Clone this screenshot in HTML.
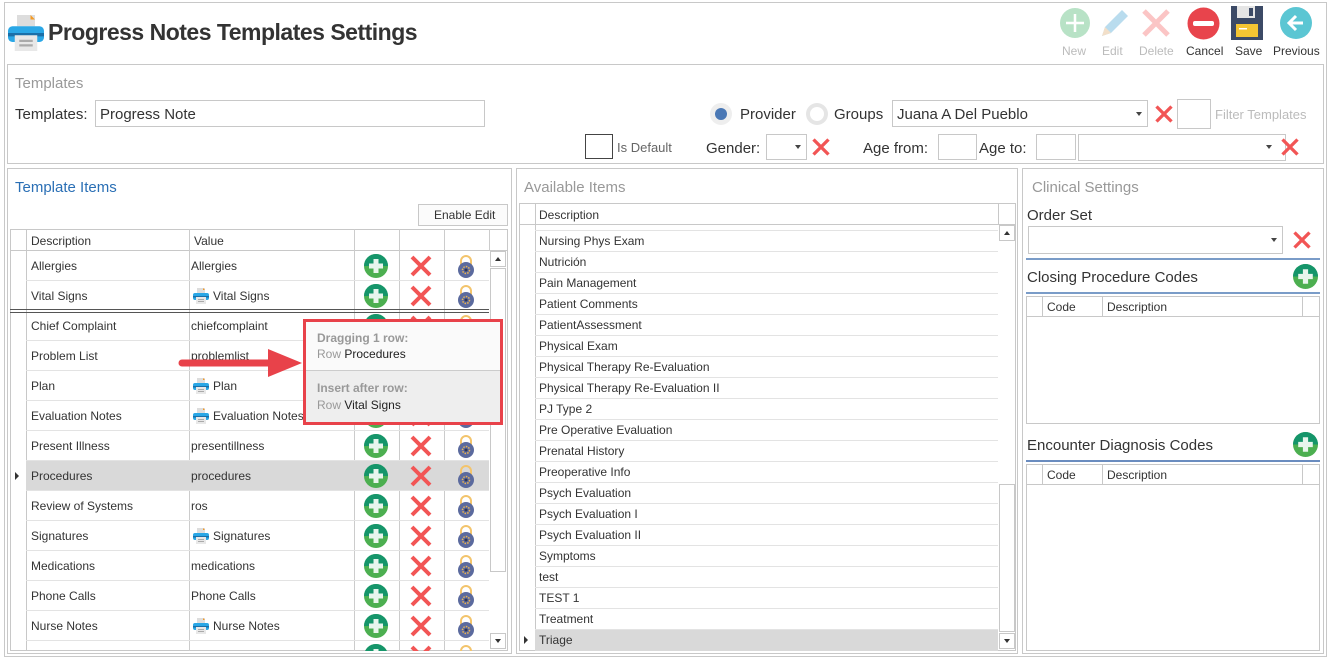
<!DOCTYPE html>
<html><head><meta charset="utf-8">
<style>
*{box-sizing:border-box;margin:0;padding:0}
body{width:1330px;height:660px;background:#fff;font-family:"Liberation Sans",sans-serif;color:#333;position:relative;overflow:hidden}
.a{position:absolute}
.bx{position:absolute;border:1px solid #c8c8c8}
.t12{font-size:12px}
.row{position:absolute;height:30px;border-bottom:1px solid #e3e3e3;font-size:12px;line-height:30px}
.arow{position:absolute;left:535px;width:463px;height:21px;border-bottom:1px solid #e3e3e3;font-size:12px;line-height:21px;padding-left:4px}
.lbl{font-size:15px;color:#333}
.gray{color:#999}
</style></head><body>
<svg width="0" height="0" style="position:absolute">
<defs>
<symbol id="plus" viewBox="0 0 24 24"><circle cx="12" cy="12" r="12" fill="#4caf50"/><path d="M0 12a12 12 0 0 1 24 0z" fill="#15956a"/><path d="M9.5 5h5v4.5H19v5h-4.5V19h-5v-4.5H5v-5h4.5z" fill="#e8f5ec"/></symbol>
<symbol id="x" viewBox="0 0 24 24"><path d="M3 3L21 21M21 3L3 21" stroke="#f25555" stroke-width="4"/></symbol>
<symbol id="lock" viewBox="0 0 24 24"><path d="M7 12V7a5 5 0 0 1 10 0v5" fill="none" stroke="#f3c46c" stroke-width="2"/><circle cx="12" cy="16" r="8" fill="#5b6a9e"/><circle cx="12" cy="16" r="3.5" fill="none" stroke="#e9b454" stroke-width="1.5" stroke-dasharray="1.5 1.2"/><circle cx="12" cy="16" r="1.5" fill="#2e3556"/></symbol>
<symbol id="prn" viewBox="0 0 16 16"><rect x="4" y="0" width="8" height="5" fill="#ddd"/><path d="M10 0l2 2h-2z" fill="#f59a23"/><rect x="0" y="5" width="16" height="7" rx="2" fill="#2aa7e6"/><rect x="0" y="8" width="16" height="1.5" fill="#1a6fa8"/><rect x="3" y="9" width="10" height="7" fill="#e8e8e8"/><rect x="5" y="11" width="6" height="1" fill="#aaa"/><rect x="5" y="13" width="6" height="1" fill="#aaa"/></symbol>
</defs></svg>

<div class="bx" style="left:4px;top:2px;width:1323px;height:655px"></div>

<svg class="a" style="left:8px;top:15px" width="36" height="36" viewBox="0 0 16 16"><use href="#prn"/></svg>
<div class="a" style="left:48px;top:19px;font-size:23px;font-weight:bold;color:#333;letter-spacing:-0.5px">Progress Notes Templates Settings</div>

<svg class="a" style="left:1060px;top:8px" width="30" height="30"><circle cx="15" cy="15" r="15" fill="#b8e2c6"/><path d="M15 6v18M6 15h18" stroke="#fff" stroke-width="2.5"/></svg>
<svg class="a" style="left:1098px;top:6px" width="32" height="34"><path d="M4 30l3-9L24 4l6 6L13 27z" fill="#b9dcee"/><path d="M4 30l3-9 6 6z" fill="#f2dfc9"/></svg>
<svg class="a" style="left:1141px;top:8px" width="30" height="30"><path d="M3 3L27 27M27 3L3 27" stroke="#fbc5c5" stroke-width="5"/></svg>
<svg class="a" style="left:1187px;top:7px" width="33" height="33"><circle cx="16.5" cy="16.5" r="16" fill="#e8444c"/><rect x="6" y="14" width="21" height="5" rx="2" fill="#fff"/></svg>
<svg class="a" style="left:1231px;top:6px" width="32" height="34"><rect x="0" y="0" width="32" height="34" fill="#3c4a66"/><rect x="6" y="0" width="18" height="12" fill="#e5e5e5"/><rect x="18" y="2" width="4" height="8" fill="#3c4a66"/><rect x="5" y="18" width="22" height="13" fill="#f4c533"/><rect x="8" y="22" width="8" height="1.5" fill="#fff"/></svg>
<svg class="a" style="left:1280px;top:7px" width="32" height="32"><circle cx="16" cy="16" r="16" fill="#5bc6d3"/><path d="M16 9l-7 7 7 7M9 16h14" stroke="#fff" stroke-width="3" fill="none"/></svg>
<div class="a t12" style="left:1062px;top:44px;color:#bbb">New</div>
<div class="a t12" style="left:1102px;top:44px;color:#bbb">Edit</div>
<div class="a t12" style="left:1139px;top:44px;color:#bbb">Delete</div>
<div class="a t12" style="left:1186px;top:44px">Cancel</div>
<div class="a t12" style="left:1235px;top:44px">Save</div>
<div class="a t12" style="left:1273px;top:44px">Previous</div>

<div class="bx" style="left:7px;top:64px;width:1317px;height:100px"></div>
<div class="a lbl gray" style="left:15px;top:75px">Templates</div>
<div class="a lbl" style="left:15px;top:106px">Templates:</div>
<div class="bx" style="left:95px;top:100px;width:390px;height:27px"></div>
<div class="a lbl" style="left:100px;top:106px">Progress Note</div>
<svg class="a" style="left:709px;top:102px" width="24" height="24"><circle cx="12" cy="12" r="11" fill="#eee"/><circle cx="12" cy="12" r="6" fill="#4a78b5"/></svg>
<div class="a lbl" style="left:740px;top:106px">Provider</div>
<svg class="a" style="left:805px;top:102px" width="24" height="24"><circle cx="12" cy="12" r="11" fill="#e5e5e5"/><circle cx="12" cy="12" r="7" fill="#fff"/></svg>
<div class="a lbl" style="left:834px;top:106px">Groups</div>
<div class="bx" style="left:892px;top:100px;width:256px;height:27px"></div>
<div class="a lbl" style="left:897px;top:106px">Juana A Del Pueblo</div>
<div class="a" style="left:1136px;top:112px;border-left:3px solid transparent;border-right:3px solid transparent;border-top:4px solid #444"></div>
<svg class="a" style="left:1154px;top:104px" width="20" height="20"><use href="#x"/></svg>
<div class="bx" style="left:1177px;top:99px;width:34px;height:30px"></div>
<div class="a" style="left:1215px;top:107px;color:#bbb;font-size:13px">Filter Templates</div>

<div class="a" style="left:585px;top:134px;width:28px;height:25px;border:1px solid #444"></div>
<div class="a" style="left:617px;top:140px;color:#666;font-size:13px">Is Default</div>
<div class="a lbl" style="left:706px;top:140px">Gender:</div>
<div class="bx" style="left:766px;top:134px;width:41px;height:26px"></div>
<div class="a" style="left:795px;top:145px;border-left:3px solid transparent;border-right:3px solid transparent;border-top:4px solid #444"></div>
<svg class="a" style="left:811px;top:137px" width="20" height="20"><use href="#x"/></svg>
<div class="a lbl" style="left:863px;top:140px">Age from:</div>
<div class="bx" style="left:938px;top:134px;width:39px;height:26px"></div>
<div class="a lbl" style="left:979px;top:140px">Age to:</div>
<div class="bx" style="left:1036px;top:134px;width:40px;height:26px"></div>
<div class="bx" style="left:1078px;top:134px;width:208px;height:27px"></div>
<div class="a" style="left:1266px;top:145px;border-left:3px solid transparent;border-right:3px solid transparent;border-top:4px solid #444"></div>
<svg class="a" style="left:1280px;top:137px" width="20" height="20"><use href="#x"/></svg>

<div class="bx" style="left:7px;top:168px;width:505px;height:486px"></div>
<div class="a lbl" style="left:15px;top:179px;color:#2a6fb5">Template Items</div>
<div class="bx" style="left:418px;top:204px;width:90px;height:22px;background:#fbfbfb"></div>
<div class="a t12" style="left:434px;top:208px">Enable Edit</div>
<div class="bx" style="left:10px;top:229px;width:498px;height:422px"></div>
<div class="a" style="left:10px;top:250px;width:497px;height:1px;background:#c8c8c8"></div>
<div class="a" style="left:26px;top:229px;width:1px;height:422px;background:#c8c8c8"></div>
<div class="a" style="left:189px;top:229px;width:1px;height:422px;background:#ccc"></div>
<div class="a" style="left:354px;top:229px;width:1px;height:422px;background:#ccc"></div>
<div class="a" style="left:399px;top:229px;width:1px;height:422px;background:#ccc"></div>
<div class="a" style="left:444px;top:229px;width:1px;height:422px;background:#ccc"></div>
<div class="a" style="left:489px;top:229px;width:1px;height:22px;background:#ccc"></div>
<div class="a t12" style="left:31px;top:234px">Description</div>
<div class="a t12" style="left:194px;top:234px">Value</div>
<div class="bx" style="left:490px;top:251px;width:16px;height:16px;background:#fff"></div>
<div class="a" style="left:495px;top:257px;border-left:3px solid transparent;border-right:3px solid transparent;border-bottom:4px solid #333"></div>
<div class="bx" style="left:490px;top:268px;width:16px;height:304px;background:#fff"></div>
<div class="bx" style="left:490px;top:633px;width:16px;height:16px;background:#fff"></div>
<div class="a" style="left:495px;top:639px;border-left:3px solid transparent;border-right:3px solid transparent;border-top:4px solid #333"></div>

<div class="a" style="left:26px;top:461px;width:463px;height:30px;background:#d9d9d9"></div>
<div class="a" style="left:15px;top:472px;border-top:4px solid transparent;border-bottom:4px solid transparent;border-left:4px solid #333"></div>

<div class="a" style="left:10px;top:309px;width:479px;height:4px;border-top:1px solid #555;border-bottom:1px solid #555"></div>

<div class="row" style="left:26px;top:251px;width:463px"><span class="a" style="left:5px">Allergies</span><span class="a" style="left:165px">Allergies</span></div>
<div class="row" style="left:26px;top:281px;width:463px;border:0"><span class="a" style="left:5px">Vital Signs</span><span class="a" style="left:187px">Vital Signs</span></div>
<div class="row" style="left:26px;top:311px;width:463px"><span class="a" style="left:5px">Chief Complaint</span><span class="a" style="left:165px">chiefcomplaint</span></div>
<div class="row" style="left:26px;top:341px;width:463px"><span class="a" style="left:5px">Problem List</span><span class="a" style="left:165px">problemlist</span></div>
<div class="row" style="left:26px;top:371px;width:463px"><span class="a" style="left:5px">Plan</span><span class="a" style="left:187px">Plan</span></div>
<div class="row" style="left:26px;top:401px;width:463px"><span class="a" style="left:5px">Evaluation Notes</span><span class="a" style="left:187px">Evaluation Notes</span></div>
<div class="row" style="left:26px;top:431px;width:463px"><span class="a" style="left:5px">Present Illness</span><span class="a" style="left:165px">presentillness</span></div>
<div class="row" style="left:26px;top:461px;width:463px"><span class="a" style="left:5px">Procedures</span><span class="a" style="left:165px">procedures</span></div>
<div class="row" style="left:26px;top:491px;width:463px"><span class="a" style="left:5px">Review of Systems</span><span class="a" style="left:165px">ros</span></div>
<div class="row" style="left:26px;top:521px;width:463px"><span class="a" style="left:5px">Signatures</span><span class="a" style="left:187px">Signatures</span></div>
<div class="row" style="left:26px;top:551px;width:463px"><span class="a" style="left:5px">Medications</span><span class="a" style="left:165px">medications</span></div>
<div class="row" style="left:26px;top:581px;width:463px"><span class="a" style="left:5px">Phone Calls</span><span class="a" style="left:165px">Phone Calls</span></div>
<div class="row" style="left:26px;top:611px;width:463px"><span class="a" style="left:5px">Nurse Notes</span><span class="a" style="left:187px">Nurse Notes</span></div>

<svg class="a" style="left:193px;top:288px" width="16" height="16"><use href="#prn"/></svg>
<svg class="a" style="left:193px;top:378px" width="16" height="16"><use href="#prn"/></svg>
<svg class="a" style="left:193px;top:408px" width="16" height="16"><use href="#prn"/></svg>
<svg class="a" style="left:193px;top:528px" width="16" height="16"><use href="#prn"/></svg>
<svg class="a" style="left:193px;top:618px" width="16" height="16"><use href="#prn"/></svg>

<svg class="a" style="left:364px;top:251px" width="24" height="400" viewBox="0 0 24 400">
<use href="#plus" y="3" width="24" height="24"/><use href="#plus" y="33" width="24" height="24"/><use href="#plus" y="63" width="24" height="24"/><use href="#plus" y="93" width="24" height="24"/><use href="#plus" y="123" width="24" height="24"/><use href="#plus" y="153" width="24" height="24"/><use href="#plus" y="183" width="24" height="24"/><use href="#plus" y="213" width="24" height="24"/><use href="#plus" y="243" width="24" height="24"/><use href="#plus" y="273" width="24" height="24"/><use href="#plus" y="303" width="24" height="24"/><use href="#plus" y="333" width="24" height="24"/><use href="#plus" y="363" width="24" height="24"/><use href="#plus" y="393" width="24" height="24"/></svg>
<svg class="a" style="left:409px;top:251px" width="24" height="400" viewBox="0 0 24 400">
<use href="#x" y="3" width="24" height="24"/><use href="#x" y="33" width="24" height="24"/><use href="#x" y="63" width="24" height="24"/><use href="#x" y="93" width="24" height="24"/><use href="#x" y="123" width="24" height="24"/><use href="#x" y="153" width="24" height="24"/><use href="#x" y="183" width="24" height="24"/><use href="#x" y="213" width="24" height="24"/><use href="#x" y="243" width="24" height="24"/><use href="#x" y="273" width="24" height="24"/><use href="#x" y="303" width="24" height="24"/><use href="#x" y="333" width="24" height="24"/><use href="#x" y="363" width="24" height="24"/><use href="#x" y="393" width="24" height="24"/></svg>
<svg class="a" style="left:454px;top:251px" width="24" height="400" viewBox="0 0 24 400">
<use href="#lock" y="3" width="24" height="24"/><use href="#lock" y="33" width="24" height="24"/><use href="#lock" y="63" width="24" height="24"/><use href="#lock" y="93" width="24" height="24"/><use href="#lock" y="123" width="24" height="24"/><use href="#lock" y="153" width="24" height="24"/><use href="#lock" y="183" width="24" height="24"/><use href="#lock" y="213" width="24" height="24"/><use href="#lock" y="243" width="24" height="24"/><use href="#lock" y="273" width="24" height="24"/><use href="#lock" y="303" width="24" height="24"/><use href="#lock" y="333" width="24" height="24"/><use href="#lock" y="363" width="24" height="24"/><use href="#lock" y="393" width="24" height="24"/></svg>

<div class="a" style="left:303px;top:319px;width:200px;height:106px;border:3px solid #e8424a;background:#fafafa">
 <div class="a" style="left:0;top:48px;width:194px;height:52px;background:#eeeeee;border-top:1px solid #ccc"></div>
 <div class="a t12" style="left:11px;top:9px;color:#999;font-weight:bold">Dragging 1 row:</div>
 <div class="a t12" style="left:11px;top:25px;color:#999">Row <span style="color:#222">Procedures</span></div>
 <div class="a t12" style="left:11px;top:59px;color:#999;font-weight:bold">Insert after row:</div>
 <div class="a t12" style="left:11px;top:76px;color:#999">Row <span style="color:#222">Vital Signs</span></div>
</div>
<svg class="a" style="left:176px;top:347px" width="128" height="32"><path d="M6 16H95" stroke="#e8424a" stroke-width="7" stroke-linecap="round"/><path d="M92 2L126 16L92 30z" fill="#e8424a"/></svg>

<div class="bx" style="left:516px;top:168px;width:502px;height:486px"></div>
<div class="a lbl gray" style="left:524px;top:179px">Available Items</div>
<div class="bx" style="left:519px;top:203px;width:497px;height:448px"></div>
<div class="a" style="left:519px;top:224px;width:497px;height:1px;background:#c8c8c8"></div>
<div class="a" style="left:535px;top:203px;width:1px;height:448px;background:#c8c8c8"></div>
<div class="a" style="left:998px;top:203px;width:1px;height:22px;background:#c8c8c8"></div>
<div class="a t12" style="left:539px;top:208px">Description</div>
<div class="a" style="left:535px;top:230px;width:463px;height:1px;background:#e3e3e3"></div>
<div class="bx" style="left:999px;top:225px;width:16px;height:16px"></div>
<div class="a" style="left:1004px;top:231px;border-left:3px solid transparent;border-right:3px solid transparent;border-bottom:4px solid #333"></div>
<div class="bx" style="left:999px;top:484px;width:16px;height:148px"></div>
<div class="bx" style="left:999px;top:633px;width:16px;height:16px"></div>
<div class="a" style="left:1004px;top:639px;border-left:3px solid transparent;border-right:3px solid transparent;border-top:4px solid #333"></div>
<div class="arow" style="top:231px">Nursing Phys Exam</div>
<div class="arow" style="top:252px">Nutrición</div>
<div class="arow" style="top:273px">Pain Management</div>
<div class="arow" style="top:294px">Patient Comments</div>
<div class="arow" style="top:315px">PatientAssessment</div>
<div class="arow" style="top:336px">Physical Exam</div>
<div class="arow" style="top:357px">Physical Therapy Re-Evaluation</div>
<div class="arow" style="top:378px">Physical Therapy Re-Evaluation II</div>
<div class="arow" style="top:399px">PJ Type 2</div>
<div class="arow" style="top:420px">Pre Operative Evaluation</div>
<div class="arow" style="top:441px">Prenatal History</div>
<div class="arow" style="top:462px">Preoperative Info</div>
<div class="arow" style="top:483px">Psych Evaluation</div>
<div class="arow" style="top:504px">Psych Evaluation I</div>
<div class="arow" style="top:525px">Psych Evaluation II</div>
<div class="arow" style="top:546px">Symptoms</div>
<div class="arow" style="top:567px">test</div>
<div class="arow" style="top:588px">TEST 1</div>
<div class="arow" style="top:609px">Treatment</div>
<div class="arow" style="top:630px;background:#d9d9d9;border:0">Triage</div>
<div class="a" style="left:524px;top:636px;border-top:4px solid transparent;border-bottom:4px solid transparent;border-left:4px solid #333"></div>

<div class="bx" style="left:1022px;top:168px;width:302px;height:486px"></div>
<div class="a lbl gray" style="left:1032px;top:179px">Clinical Settings</div>
<div class="a lbl" style="left:1027px;top:207px">Order Set</div>
<div class="bx" style="left:1028px;top:226px;width:255px;height:28px"></div>
<div class="a" style="left:1271px;top:238px;border-left:3px solid transparent;border-right:3px solid transparent;border-top:4px solid #444"></div>
<svg class="a" style="left:1292px;top:230px" width="20" height="20"><use href="#x"/></svg>
<div class="a" style="left:1026px;top:258px;width:294px;height:2px;background:#7a9cc8"></div>
<div class="a lbl" style="left:1027px;top:269px">Closing Procedure Codes</div>
<svg class="a" style="left:1293px;top:264px" width="25" height="25"><use href="#plus"/></svg>
<div class="a" style="left:1026px;top:292px;width:294px;height:2px;background:#7a9cc8"></div>
<div class="bx" style="left:1026px;top:296px;width:294px;height:128px"></div>
<div class="a" style="left:1026px;top:316px;width:294px;height:1px;background:#c8c8c8"></div>
<div class="a" style="left:1042px;top:296px;width:1px;height:21px;background:#c8c8c8"></div>
<div class="a" style="left:1102px;top:296px;width:1px;height:21px;background:#c8c8c8"></div>
<div class="a" style="left:1302px;top:296px;width:1px;height:21px;background:#c8c8c8"></div>
<div class="a t12" style="left:1047px;top:300px">Code</div>
<div class="a t12" style="left:1107px;top:300px">Description</div>
<div class="a lbl" style="left:1027px;top:437px">Encounter Diagnosis Codes</div>
<svg class="a" style="left:1293px;top:432px" width="25" height="25"><use href="#plus"/></svg>
<div class="a" style="left:1026px;top:460px;width:294px;height:2px;background:#6a8cbf"></div>
<div class="bx" style="left:1026px;top:464px;width:294px;height:187px"></div>
<div class="a" style="left:1026px;top:484px;width:294px;height:1px;background:#c8c8c8"></div>
<div class="a" style="left:1042px;top:464px;width:1px;height:21px;background:#c8c8c8"></div>
<div class="a" style="left:1102px;top:464px;width:1px;height:21px;background:#c8c8c8"></div>
<div class="a" style="left:1302px;top:464px;width:1px;height:21px;background:#c8c8c8"></div>
<div class="a t12" style="left:1047px;top:468px">Code</div>
<div class="a t12" style="left:1107px;top:468px">Description</div>
</body></html>
